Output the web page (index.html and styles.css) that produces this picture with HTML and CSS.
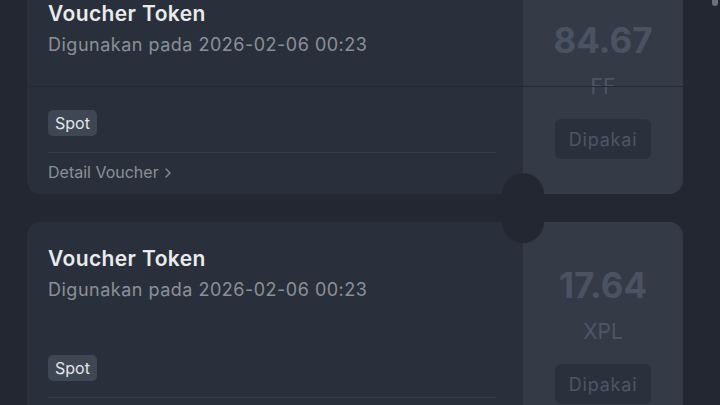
FILE: index.html
```html
<!DOCTYPE html>
<html lang="id">
<head>
<meta charset="utf-8">
<title>Voucher</title>
<link rel="stylesheet" href="styles.css">
</head>
<body>
<div class="scroll-thumb"></div>
<main class="list">
  <article class="voucher voucher--cut">
    <div class="voucher-main">
      <h2 class="voucher-title">Voucher Token</h2>
      <p class="voucher-date">Digunakan pada 2026-02-06 00:23</p>
      <span class="tag">Spot</span>
      <div class="voucher-foot">
        <a class="detail-link">Detail Voucher
          <svg class="chev" width="6" height="10" viewBox="0 0 6 10"><path d="M1 1l4 4-4 4" fill="none" stroke="currentColor" stroke-width="1.3" stroke-linecap="round" stroke-linejoin="round"/></svg>
        </a>
      </div>
    </div>
    <div class="voucher-side">
      <div class="amount">84.67</div>
      <div class="unit">FF</div>
      <button class="used-btn">Dipakai</button>
    </div>
  </article>
  <article class="voucher">
    <div class="voucher-main">
      <h2 class="voucher-title">Voucher Token</h2>
      <p class="voucher-date">Digunakan pada 2026-02-06 00:23</p>
      <span class="tag">Spot</span>
      <div class="voucher-foot">
        <a class="detail-link">Detail Voucher
          <svg class="chev" width="6" height="10" viewBox="0 0 6 10"><path d="M1 1l4 4-4 4" fill="none" stroke="currentColor" stroke-width="1.3" stroke-linecap="round" stroke-linejoin="round"/></svg>
        </a>
      </div>
    </div>
    <div class="voucher-side">
      <div class="amount">17.64</div>
      <div class="unit">XPL</div>
      <button class="used-btn">Dipakai</button>
    </div>
  </article>
</main>
</body>
</html>
```
FILE: styles.css
```css
* { box-sizing: border-box; }
html, body {
  margin: 0;
  background: #222731;
  font-family: "Inter", "Lato", sans-serif;
  overflow: hidden;
}
.scroll-thumb {
  position: fixed;
  top: -10px;
  right: 2px;
  width: 6px;
  height: 16px;
  border-radius: 3px;
  background: #6b727e;
}
.list {
  display: flex;
  flex-direction: column;
  gap: 28px;
  padding: 0 37px 0 27px;
  margin-top: -23px;
}
.voucher {
  position: relative;
  display: flex;
  height: 217px;
  background: #2a303b;
  border-radius: 14px;
  overflow: hidden;
}
.voucher::before,
.voucher::after {
  content: "";
  position: absolute;
  left: 475px;
  width: 42px;
  height: 42px;
  border-radius: 50%;
  background: #222731;
  z-index: 2;
}
.voucher::before { top: -21px; }
.voucher::after { bottom: -21px; }
.voucher--cut .voucher-side::after {
  content: "";
  position: absolute;
  left: -496px;
  right: 0;
  top: 109px;
  height: 1px;
  background: #242932;
}
.voucher-main {
  flex: 0 0 496px;
  padding: 23px 27px 0 21px;
  display: flex;
  flex-direction: column;
  align-items: flex-start;
}
.voucher-title {
  margin: 0;
  font-size: 21px;
  line-height: 28px;
  font-weight: 600;
  letter-spacing: 0.4px;
  color: #e9ebee;
}
.voucher-date {
  margin: 4px 0 0;
  font-size: 18px;
  line-height: 26px;
  letter-spacing: 0.5px;
  color: #8a9099;
}
.tag {
  margin-top: 52px;
  height: 26px;
  padding: 0 7px;
  border-radius: 5px;
  background: #3f4754;
  color: #e2e5e9;
  font-size: 16px;
  line-height: 26px;
}
.voucher-foot {
  align-self: stretch;
  margin-top: 16px;
  border-top: 1px solid #353c47;
  padding-top: 8px;
}
.detail-link {
  display: flex;
  align-items: center;
  gap: 6px;
  font-size: 16px;
  line-height: 22px;
  color: #8a9099;
}
.chev { color: #8a9099; margin-top: 2px; }
.voucher-side {
  position: relative;
  flex: 1;
  background: #343b47;
  display: flex;
  flex-direction: column;
  align-items: center;
  padding-top: 43px;
}
.amount {
  font-size: 35px;
  line-height: 40px;
  font-weight: 700;
  color: #4b5262;
}
.unit {
  margin-top: 15px;
  font-size: 21px;
  line-height: 24px;
  color: #4e5666;
}
.used-btn {
  margin-top: 20px;
  width: 96px;
  height: 40px;
  border: 0;
  border-radius: 6px;
  background: #2b313c;
  color: #4e5666;
  font-family: inherit;
  font-size: 18px;
  letter-spacing: 0.8px;
  padding: 0;
}
```
